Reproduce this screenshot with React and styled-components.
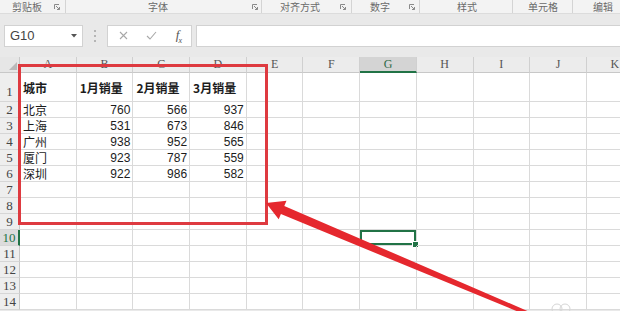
import React from 'react';
import styled, { createGlobalStyle } from 'styled-components';

const GlobalStyle = createGlobalStyle`
  html, body {
    margin: 0;
    padding: 0;
    background: #ffffff;
  }
  body {
    font-family: "Noto Sans CJK SC", "Liberation Sans", sans-serif;
  }
`;

const Frame = styled.div`
  position: relative;
  width: 620px;
  height: 311px;
  overflow: hidden;
  background: #e9e9e9;
`;

const RibbonBar = styled.div`
  display: flex;
  height: 13px;
  background: #f3f3f3;
  border-bottom: 1px solid #dcdcdc;
  font-size: 10px;
  line-height: 13px;
  color: #6a6a6a;
`;

const RibbonGroup = styled.div`
  display: flex;
  align-items: center;
  box-sizing: border-box;
  width: ${(p) => p.$w}px;
  flex: ${(p) => (p.$last ? '1' : 'none')};
  padding: 0 ${(p) => p.$pr || 0}px 0 ${(p) => p.$pl}px;
  border-right: ${(p) => (p.$last ? 'none' : '1px solid #d4d4d4')};
  white-space: nowrap;
`;

const Launcher = styled.svg`
  margin-left: auto;
  width: 6px;
  height: 6px;
`;

const Toolbar = styled.div`
  display: flex;
  align-items: center;
  height: 43px;
  padding-left: 4px;
`;

const NameBox = styled.div`
  display: flex;
  align-items: center;
  justify-content: space-between;
  box-sizing: border-box;
  width: 79px;
  height: 22px;
  padding: 0 5px 0 5px;
  background: #ffffff;
  border: 1px solid #d2d2d2;
  font-family: "Liberation Sans", sans-serif;
  font-size: 13px;
  color: #444;
`;

const DotsWrap = styled.div`
  display: flex;
  flex-direction: column;
  align-items: center;
  gap: 3px;
  width: 24px;
`;

const Dot = styled.span`
  width: 2px;
  height: 2px;
  background: #b5b5b5;
`;

const FxBox = styled.div`
  display: flex;
  align-items: center;
  justify-content: space-between;
  box-sizing: border-box;
  width: 85px;
  height: 22px;
  padding: 0 10px 0 11px;
  background: #ffffff;
  border: 1px solid #d2d2d2;
`;

const FxLabel = styled.span`
  font-family: "Liberation Serif", serif;
  font-style: italic;
  font-size: 13px;
  color: #555;
  letter-spacing: -1px;

  sub {
    font-size: 8px;
  }
`;

const FormulaInput = styled.div`
  flex: 1;
  height: 22px;
  margin-left: 4px;
  box-sizing: border-box;
  background: #ffffff;
  border: 1px solid #d2d2d2;
  border-right: none;
`;

const Sheet = styled.div`
  display: grid;
  grid-template-columns: 20px repeat(11, 56.7px);
  grid-template-rows: 16px 29px repeat(13, 16px);
  background: #ffffff;
`;

const Corner = styled.div`
  position: relative;
  box-sizing: border-box;
  background: #e6e6e6;
  border-right: 1px solid #c8c8c8;
  border-bottom: 1px solid #c8c8c8;

  &::after {
    content: '';
    position: absolute;
    right: 2px;
    bottom: 2px;
    border-left: 8px solid transparent;
    border-bottom: 8px solid #b9b9b9;
  }
`;

const ColHeader = styled.div`
  display: flex;
  align-items: center;
  justify-content: center;
  box-sizing: border-box;
  background: ${(p) => (p.$active ? '#d4d4d4' : '#ececec')};
  border-right: 1px solid #d0d0d0;
  border-bottom: ${(p) => (p.$active ? '2px solid #217346' : '1px solid #c8c8c8')};
  font-family: "Liberation Serif", serif;
  font-size: 12px;
  color: ${(p) => (p.$active ? '#2f6a48' : '#555')};
`;

const RowHeader = styled.div`
  display: flex;
  align-items: ${(p) => (p.$tall ? 'flex-end' : 'center')};
  justify-content: center;
  box-sizing: border-box;
  padding-bottom: ${(p) => (p.$tall ? '1px' : '0')};
  background: ${(p) => (p.$active ? '#dcdcdc' : '#eeeeee')};
  border-right: ${(p) => (p.$active ? '2px solid #217346' : '1px solid #c8c8c8')};
  border-bottom: 1px solid #d6d6d6;
  font-family: "Liberation Serif", serif;
  font-size: 13px;
  color: ${(p) => (p.$active ? '#217346' : '#444')};
`;

const Cell = styled.div`
  position: relative;
  display: flex;
  align-items: center;
  justify-content: ${(p) => (p.$right ? 'flex-end' : 'flex-start')};
  box-sizing: border-box;
  padding: 0 2px 0 3px;
  border-right: 1px solid #dadada;
  border-bottom: 1px solid #dadada;
  font-family: ${(p) => (p.$right ? '"Liberation Sans", sans-serif' : '"Noto Sans CJK SC", sans-serif')};
  font-size: 12px;
  font-weight: ${(p) => (p.$bold ? 700 : 400)};
  color: #1c1c1c;
  white-space: nowrap;
  box-shadow: ${(p) => (p.$selected ? 'inset 0 0 0 2px #217346' : 'none')};

  ${(p) =>
    p.$selected &&
    `
    &::after {
      content: '';
      position: absolute;
      right: -3px;
      bottom: -3px;
      width: 5px;
      height: 5px;
      background: #217346;
      border: 1px solid #ffffff;
    }
  `}
`;

const RedBox = styled.div`
  position: absolute;
  left: 18px;
  top: 64px;
  width: 250px;
  height: 161px;
  box-sizing: border-box;
  border: 3px solid #de3a40;
  pointer-events: none;
`;

const Overlay = styled.svg`
  position: absolute;
  left: 0;
  top: 0;
  width: 620px;
  height: 311px;
  pointer-events: none;
`;

const groups = [
  { label: '剪贴板', w: 66, pl: 12, pr: 5, launcher: true },
  { label: '字体', w: 196, pl: 82, pr: 3, launcher: true },
  { label: '对齐方式', w: 90, pl: 18, pr: 5, launcher: true },
  { label: '数字', w: 68, pl: 18, pr: 4, launcher: true },
  { label: '样式', w: 93, pl: 37 },
  { label: '单元格', w: 60, pl: 15 },
  { label: '编辑', w: 47, pl: 20, last: true },
];

const cols = ['A', 'B', 'C', 'D', 'E', 'F', 'G', 'H', 'I', 'J', 'K'];

const data = {
  1: ['城市', '1月销量', '2月销量', '3月销量'],
  2: ['北京', 760, 566, 937],
  3: ['上海', 531, 673, 846],
  4: ['广州', 938, 952, 565],
  5: ['厦门', 923, 787, 559],
  6: ['深圳', 922, 986, 582],
};

const rowNums = Array.from({ length: 14 }, (_, i) => i + 1);

function LauncherIcon() {
  return (
    <Launcher viewBox="0 0 6 6">
      <path d="M0.5 5V0.5H5" fill="none" stroke="#8a8a8a" strokeWidth="1" />
      <path d="M2 2L5.5 5.5M5.5 3V5.5H3" fill="none" stroke="#8a8a8a" strokeWidth="1" />
    </Launcher>
  );
}

export default function App() {
  return (
    <>
      <GlobalStyle />
      <Frame>
        <RibbonBar>
          {groups.map((g) => (
            <RibbonGroup key={g.label} $w={g.w} $pl={g.pl} $pr={g.pr} $last={g.last}>
              {g.label}
              {g.launcher && <LauncherIcon />}
            </RibbonGroup>
          ))}
        </RibbonBar>

        <Toolbar>
          <NameBox>
            G10
            <svg width="6" height="4" viewBox="0 0 6 4">
              <path d="M0 0H6L3 3.5Z" fill="#555" />
            </svg>
          </NameBox>
          <DotsWrap>
            <Dot />
            <Dot />
            <Dot />
          </DotsWrap>
          <FxBox>
            <svg width="9" height="9" viewBox="0 0 9 9">
              <path d="M1 1L8 8M8 1L1 8" stroke="#a8a8a8" strokeWidth="1.1" />
            </svg>
            <svg width="11" height="9" viewBox="0 0 11 9">
              <path d="M1 5L4 8L10 1" fill="none" stroke="#a8a8a8" strokeWidth="1.1" />
            </svg>
            <FxLabel>
              f<sub>x</sub>
            </FxLabel>
          </FxBox>
          <FormulaInput />
        </Toolbar>

        <Sheet>
          <Corner />
          {cols.map((c) => (
            <ColHeader key={c} $active={c === 'G'}>
              {c}
            </ColHeader>
          ))}
          {rowNums.map((r) => (
            <React.Fragment key={r}>
              <RowHeader $tall={r === 1} $active={r === 10}>
                {r}
              </RowHeader>
              {cols.map((c, i) => {
                const v = data[r] ? data[r][i] : undefined;
                return (
                  <Cell
                    key={c}
                    $right={typeof v === 'number'}
                    $bold={r === 1}
                    $selected={r === 10 && c === 'G'}
                  >
                    {v}
                  </Cell>
                );
              })}
            </React.Fragment>
          ))}
        </Sheet>

        <RedBox />
        <Overlay viewBox="0 0 620 311">
          <polygon
            points="266,203 286.5,200.8 284.3,205.9 540.6,316.7 539,320.3 280.9,214.1 278.7,219.2"
            fill="#e5282e"
          />
          <circle cx="557" cy="309" r="5" fill="none" stroke="#d6d6d6" strokeWidth="1" />
          <circle cx="565" cy="309" r="5" fill="none" stroke="#d6d6d6" strokeWidth="1" />
        </Overlay>
      </Frame>
    </>
  );
}
